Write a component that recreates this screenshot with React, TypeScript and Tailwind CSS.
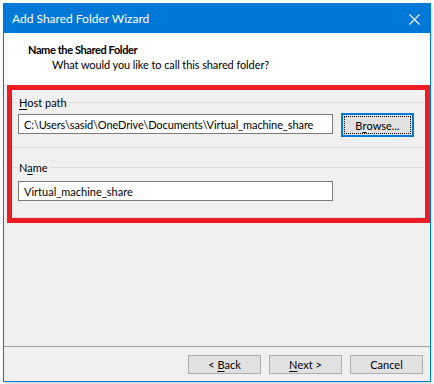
export default function App() {
  const font = { fontFamily: 'Lato, "Noto Sans", sans-serif' };
  return (
    <div className="w-[434px] h-[384px] bg-white overflow-hidden" style={font}>
      <div className="ml-[3px] mt-[3px] w-[428px] h-[379px] border border-[#0078d7] bg-[#f0f0f0] flex flex-col shadow-[1px_2px_3px_rgba(0,0,0,0.18)]">
        {/* title bar */}
        <div className="h-[29px] bg-[#0078d7] flex items-center justify-between pl-[8px] pr-[10px] shrink-0">
          <span className="text-white text-[12px] leading-none">Add Shared Folder Wizard</span>
          <svg width="11" height="11" viewBox="0 0 11 11" className="mt-[2px]">
            <path d="M0.5 0.5L10.5 10.5M10.5 0.5L0.5 10.5" stroke="white" strokeWidth="1.1" />
          </svg>
        </div>

        {/* header */}
        <div className="h-[52px] bg-white shrink-0 pl-[24px] pt-[9px] text-[11px] leading-[15px] text-black">
          <div className="font-bold tracking-[-0.4px]">Name the Shared Folder</div>
          <div className="pl-[24px] tracking-[-0.1px]">What would you like to call this shared folder?</div>
        </div>

        {/* highlighted content */}
        <div className="ml-[3px] w-[423px] h-[138px] border-[5px] border-[#ed1c24] shrink-0 flex flex-col text-[11px] text-black">
          <div className="pt-[5px] h-[19px] flex items-center shrink-0">
            <div className="w-[5px] h-px bg-[#dcdcdc]" />
            <span className="px-[2px] leading-none">
              <span className="underline underline-offset-2">H</span>ost path
            </span>
            <div className="flex-1 h-px bg-[#dcdcdc] mr-px" />
          </div>
          <div className="mt-[4px] h-[24px] flex items-start shrink-0">
            <div className="ml-[6px] mt-[1px] w-[315px] h-[20px] border border-[#7a7a7a] bg-white flex items-center pl-[5px] leading-none whitespace-nowrap overflow-hidden tracking-[-0.1px]">
              C:\Users\sasid\OneDrive\Documents\Virtual_machine_share
            </div>
            <button className="ml-[8px] w-[73px] h-[24px] border-2 border-[#0078d7] bg-[#e1e1e1] p-px">
              <div className="w-full h-full border border-dotted border-black flex items-center justify-center leading-none">
                B<span className="underline underline-offset-2">r</span>owse...
              </div>
            </button>
          </div>
          <div className="mt-[10px] h-px bg-[#dcdcdc] mr-px shrink-0" />
          <div className="mt-[12px] h-[14px] flex items-center shrink-0">
            <div className="w-[5px] h-px bg-[#dcdcdc]" />
            <span className="px-[2px] leading-none">
              N<span className="underline underline-offset-2">a</span>me
            </span>
            <div className="flex-1 h-px bg-[#dcdcdc] mr-px" />
          </div>
          <div className="mt-[7px] ml-[6px] w-[315px] h-[20px] border border-[#7a7a7a] bg-white flex items-center pl-[5px] leading-none shrink-0">
            Virtual_machine_share
          </div>
          <div className="flex-1" />
          <div className="h-px bg-[#dcdcdc] mr-px shrink-0" />
        </div>

        <div className="flex-1" />

        {/* footer */}
        <div className="h-px bg-[#a0a0a0] shrink-0" />
        <div className="h-[34px] shrink-0 flex justify-end gap-[8px] pt-[8px] pr-[7px] text-[11px] text-black">
          <button className="w-[73px] h-[19px] border border-[#adadad] bg-[#e1e1e1] leading-none flex items-center justify-center">
            &lt;&nbsp;<span className="underline underline-offset-2">B</span>ack
          </button>
          <button className="w-[73px] h-[19px] border border-[#adadad] bg-[#e1e1e1] leading-none flex items-center justify-center">
            <span className="underline underline-offset-2">N</span>ext &gt;
          </button>
          <button className="w-[73px] h-[19px] border border-[#adadad] bg-[#e1e1e1] leading-none flex items-center justify-center">
            Cancel
          </button>
        </div>
      </div>
    </div>
  );
}
